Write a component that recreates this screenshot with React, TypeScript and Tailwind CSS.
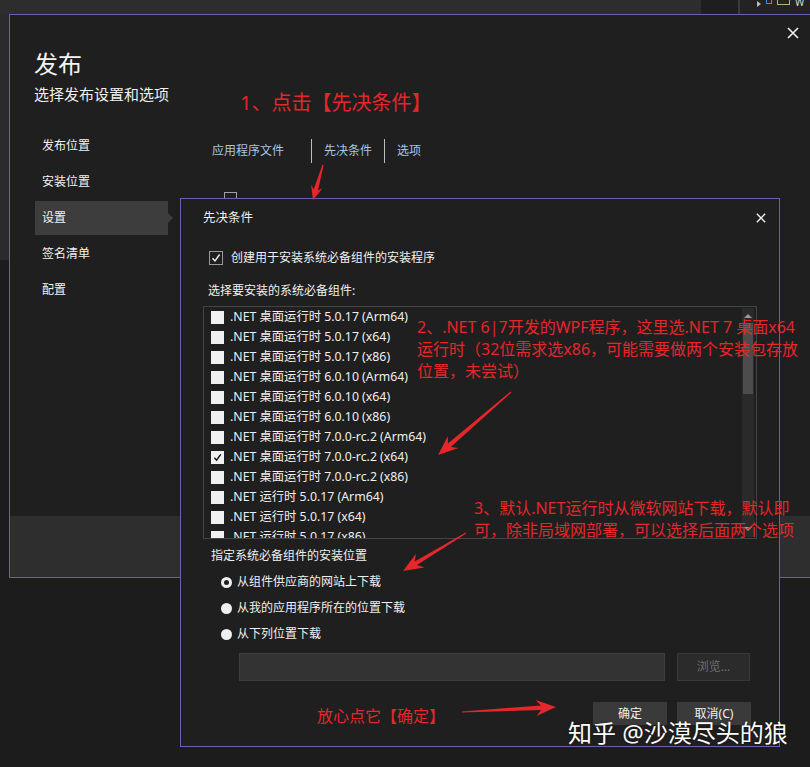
const RED = "#e5262b";

const navItems = ["发布位置", "安装位置", "设置", "签名清单", "配置"];

const prereqs = [
  { label: ".NET 桌面运行时 5.0.17 (Arm64)" },
  { label: ".NET 桌面运行时 5.0.17 (x64)" },
  { label: ".NET 桌面运行时 5.0.17 (x86)" },
  { label: ".NET 桌面运行时 6.0.10 (Arm64)" },
  { label: ".NET 桌面运行时 6.0.10 (x64)" },
  { label: ".NET 桌面运行时 6.0.10 (x86)" },
  { label: ".NET 桌面运行时 7.0.0-rc.2 (Arm64)" },
  { label: ".NET 桌面运行时 7.0.0-rc.2 (x64)", checked: true },
  { label: ".NET 桌面运行时 7.0.0-rc.2 (x86)" },
  { label: ".NET 运行时 5.0.17 (Arm64)" },
  { label: ".NET 运行时 5.0.17 (x64)" },
  { label: ".NET 运行时 5.0.17 (x86)" },
];

// tapered red arrow, tail -> tip
function arrowPoints(x1: number, y1: number, x2: number, y2: number, head = 18, wing = 7) {
  const dx = x2 - x1;
  const dy = y2 - y1;
  const len = Math.hypot(dx, dy);
  const ux = dx / len;
  const uy = dy / len;
  const nx = -uy;
  const ny = ux;
  const p = (a: number, b: number) => `${(x1 + ux * a + nx * b).toFixed(1)},${(y1 + uy * a + ny * b).toFixed(1)}`;
  return [
    p(0, 0.6),
    p(len - head * 0.75, 2.2),
    p(len - head, wing),
    p(len, 0),
    p(len - head, -wing),
    p(len - head * 0.75, -2.2),
    p(0, -0.6),
  ].join(" ");
}

function CloseIcon({ size = 12 }: { size?: number }) {
  return (
    <svg width={size} height={size} viewBox="0 0 12 12">
      <path d="M1 1 L11 11 M11 1 L1 11" stroke="#f2f2f2" strokeWidth="1.6" />
    </svg>
  );
}

function TopStrip() {
  return (
    <div className="flex h-[14px]">
      <div className="flex-1 bg-[#2d2d2d]" />
      <div className="w-[37px] bg-[#1e1e1e]" />
      <div className="w-[2px] bg-[#3b3b3b]" />
      <div className="flex w-[70px] items-start gap-[5px] bg-[#232323] pl-[17px]">
        <div className="mt-[1px] h-0 w-0 border-y-[3px] border-l-[4px] border-y-transparent border-l-[#bbbbbb]" />
        <div className="h-[4px] w-[6px] border border-t-0 border-[#4a8fd8]" />
        <div className="h-[5px] w-[13px] border border-t-0 border-[#b5b57a]" />
        <div className="text-[10px] leading-[5px] text-[#dddddd]">W</div>
      </div>
    </div>
  );
}

function MainWindow() {
  return (
    <div className="flex h-[564px] flex-1 flex-col border-y border-l border-[#6a5fb8] bg-[#1f1f1f]">
      <div className="flex items-start justify-between">
        <div className="pl-[24px] pt-[33px]">
          <div className="text-[24px] leading-[32px] text-[#f4f4f4]">发布</div>
          <div className="mt-[4px] text-[15px] leading-[20px] text-[#f0f0f0]">选择发布设置和选项</div>
        </div>
        <div className="mr-[11px] mt-[12px]">
          <CloseIcon />
        </div>
      </div>

      <div className="flex">
        <div className="ml-[25px] mt-[25px] flex w-[133px] flex-col gap-[2px]">
          {navItems.map((item) => (
            <div
              key={item}
              className={
                item === "设置"
                  ? "relative flex h-[34px] items-center bg-[#3d3d3d] pl-[7px] text-[12px] text-[#f2f2f2]"
                  : "flex h-[34px] items-center pl-[7px] text-[12px] text-[#f2f2f2]"
              }
            >
              {item}
              {item === "设置" && (
                <div className="absolute right-[-5px] top-[12px] h-0 w-0 border-y-[5px] border-l-[5px] border-y-transparent border-l-[#3d3d3d]" />
              )}
            </div>
          ))}
        </div>

        <div className="ml-[44px] mt-[35px] flex flex-col">
          <div className="flex h-[24px] items-center text-[12px] text-[#a6c6e6]">
            <span className="mr-[27px]">应用程序文件</span>
            <div className="h-[24px] w-px bg-[#bdbdbd]" />
            <span className="mx-[12px]">先决条件</span>
            <div className="h-[24px] w-px bg-[#bdbdbd]" />
            <span className="ml-[12px]">选项</span>
          </div>
          <div className="ml-[12px] mt-[29px] h-[13px] w-[13px] border border-[#a0a0a0]" />
        </div>
      </div>

      <div className="mt-auto h-[61px] bg-[#2e2e2e]" />
    </div>
  );
}

function Scrollbar() {
  return (
    <div className="my-[1px] mr-[2px] flex w-[12px] flex-col items-center bg-[#2a2a2a]">
      <div className="mt-[6px] h-0 w-0 border-x-[4px] border-b-[4px] border-x-transparent border-b-[#9a9a9a]" />
      <div className="mt-[5px] h-[71px] w-[10px] bg-[#4c4c4c]" />
      <div className="mb-[6px] mt-auto h-0 w-0 border-x-[4px] border-t-[4px] border-x-transparent border-t-[#9a9a9a]" />
    </div>
  );
}

function PrereqDialog() {
  return (
    <div className="absolute left-[180px] top-[198px] flex h-[549px] w-[600px] flex-col border border-[#6a5fb8] bg-[#1f1f1f] px-[22px] text-[12px] text-[#f0f0f0]">
      <div className="flex h-[38px] items-center justify-between">
        <span className="text-[12.5px]">先决条件</span>
        <div className="-mr-[9px]">
          <CloseIcon size={10} />
        </div>
      </div>

      <div className="mt-[11px] flex h-[20px] items-center">
        <div className="ml-[6px] flex h-[14px] w-[14px] items-center justify-center border border-[#9a9a9a] bg-[#1f1f1f]">
          <svg width="10" height="10" viewBox="0 0 10 10">
            <path d="M1.5 5.2 L4 8 L8.6 1.5" stroke="#f2f2f2" strokeWidth="1.4" fill="none" />
          </svg>
        </div>
        <span className="ml-[8px]">创建用于安装系统必备组件的安装程序</span>
      </div>

      <div className="ml-[5px] mt-[13px] flex h-[20px] items-center">选择要安装的系统必备组件:</div>

      <div className="mt-[5px] flex h-[233px] border border-[#444444]">
        <div className="flex flex-1 flex-col overflow-hidden pl-[7px] text-[12.3px]">
          {prereqs.map((p) => (
            <div key={p.label} className="flex h-[20px] shrink-0 items-center whitespace-nowrap">
              <div className="flex h-[13px] w-[13px] items-center justify-center bg-[#f0f0f0]">
                {p.checked && (
                  <svg width="9" height="9" viewBox="0 0 10 10">
                    <path d="M1.5 5.2 L4 8 L8.6 1.5" stroke="#111111" strokeWidth="1.6" fill="none" />
                  </svg>
                )}
              </div>
              <span className="ml-[6px]">{p.label}</span>
            </div>
          ))}
        </div>
        <Scrollbar />
      </div>

      <div className="ml-[8px] mt-[7px] flex h-[20px] items-center">指定系统必备组件的安装位置</div>

      <div className="mt-[3px] flex flex-col">
        {["从组件供应商的网站上下载", "从我的应用程序所在的位置下载", "从下列位置下载"].map((r, i) => (
          <div key={r} className="flex h-[26px] items-center">
            <div
              className={
                i === 0
                  ? "ml-[18px] h-[11px] w-[11px] rounded-full border-[3px] border-[#efefef] bg-[#1f1f1f]"
                  : "ml-[18px] h-[11px] w-[11px] rounded-full bg-[#efefef]"
              }
            />
            <span className="ml-[5px]">{r}</span>
          </div>
        ))}
      </div>

      <div className="ml-[36px] mt-[6px] flex h-[28px] gap-[12px]">
        <div className="w-[426px] border border-[#3d3d3d] bg-[#333333]" />
        <div className="flex w-[73px] items-center justify-center border border-[#393939] bg-[#2b2b2b] text-[#6e6e6e]">
          浏览...
        </div>
      </div>

      <div className="mr-[6px] mt-[21px] flex justify-end gap-[10px]">
        <div className="flex h-[23px] w-[74px] items-center justify-center bg-[#3a3a3a]">确定</div>
        <div className="flex h-[23px] w-[74px] items-center justify-center bg-[#3a3a3a]">取消(C)</div>
      </div>
    </div>
  );
}

function Annotations() {
  return (
    <div className="pointer-events-none absolute inset-0">
      <svg className="absolute inset-0" width="810" height="767">
        <polygon points={arrowPoints(323, 165, 313, 200, 14, 6)} fill={RED} />
        <polygon points={arrowPoints(511, 392, 438, 455, 20, 8)} fill={RED} />
        <polygon points={arrowPoints(466, 533, 403, 571, 20, 8)} fill={RED} />
        <polygon points={arrowPoints(462, 712, 556, 707, 20, 8)} fill={RED} />
      </svg>

      <div className="absolute left-[240px] top-[91px] whitespace-nowrap text-[20px] leading-[24px]" style={{ color: RED }}>
        1、点击【先决条件】
      </div>

      <div className="absolute left-[417px] top-[316px] whitespace-nowrap text-[16px] leading-[22px]" style={{ color: RED }}>
        <div>2、.NET 6|7开发的WPF程序，这里选.NET 7 桌面x64</div>
        <div>运行时（32位需求选x86，可能需要做两个安装包存放</div>
        <div>位置，未尝试）</div>
      </div>

      <div className="absolute left-[474px] top-[497px] whitespace-nowrap text-[16px] leading-[22px]" style={{ color: RED }}>
        <div>3、默认.NET运行时从微软网站下载，默认即</div>
        <div>可，除非局域网部署，可以选择后面两个选项</div>
      </div>

      <div className="absolute left-[317px] top-[705px] whitespace-nowrap text-[16px] leading-[22px]" style={{ color: RED }}>
        放心点它【确定】
      </div>

      <div className="absolute left-[568px] top-[717px] whitespace-nowrap text-[24px] leading-[32px] text-white [text-shadow:0_0_2px_rgba(0,0,0,0.6)]">
        知乎 @沙漠尽头的狼
      </div>
    </div>
  );
}

export default function App() {
  return (
    <div className="relative h-[767px] w-[810px] overflow-hidden bg-[#1c1c1c] font-['Noto_Sans','Noto_Sans_CJK_SC',sans-serif] text-[#f1f1f1]">
      <TopStrip />
      <div className="flex">
        <div className="w-[9px]">
          <div className="h-[246px] bg-[#2b2b2b]" />
        </div>
        <MainWindow />
      </div>
      <PrereqDialog />
      <Annotations />
    </div>
  );
}
